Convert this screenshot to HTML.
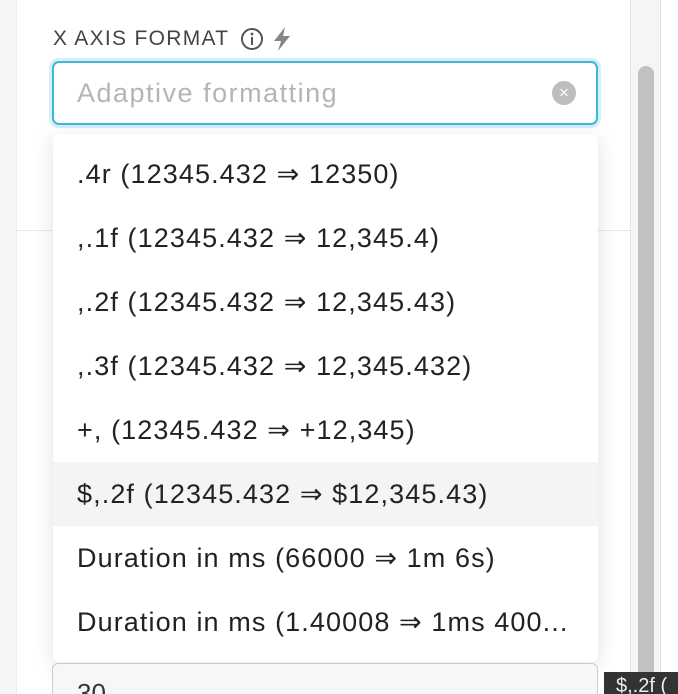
<!DOCTYPE html><html><head><style>
html,body{margin:0;width:678px;height:694px;overflow:hidden}
body{background:#fff;font-family:"Liberation Sans",sans-serif;position:relative}
.a{position:absolute}
</style></head><body>
<div class="a" style="left:0;top:0;width:16px;height:694px;background:#f6f6f6;border-right:1px solid #ececec"></div>
<div class="a" style="left:630px;top:0;width:29px;height:694px;background:#f5f5f5;border-left:1px solid #e6e6e6;border-right:1px solid #e0e0e0"></div>
<div class="a" style="left:638px;top:66px;width:16px;height:628px;background:#c1c1c1;border-radius:8px 8px 0 0"></div>
<div class="a" style="left:16px;top:230px;width:614px;height:1px;background:#e6e6e6"></div>
<div class="a" style="left:53px;top:27px;font-size:21px;color:#444;letter-spacing:1.3px">X AXIS FORMAT</div>
<svg class="a" style="left:240px;top:27px" width="24" height="24" viewBox="0 0 24 24"><circle cx="12" cy="12" r="10" fill="none" stroke="#555" stroke-width="2"/><circle cx="12" cy="7" r="1.4" fill="#555"/><rect x="11" y="10" width="2" height="8" fill="#555"/></svg>
<svg class="a" style="left:270px;top:26px" width="24" height="26" viewBox="0 0 24 26"><path d="M15 1 L4 15 H11 L8 25 L20 10 H13 Z" fill="#888"/></svg>
<div class="a" style="left:52px;top:61px;width:542px;height:60px;border:2px solid #3fb8d5;border-radius:7px;box-shadow:0 0 0 3px #d6eef5;background:#fff"></div>
<div class="a" style="left:77px;top:78px;font-size:27px;color:#b5b5b5;letter-spacing:1.5px">Adaptive formatting</div>
<div class="a" style="left:552px;top:81px;width:24px;height:24px;border-radius:50%;background:#bdbdbd;color:#fff;font-size:17px;line-height:24px;text-align:center">×</div>
<div class="a" style="left:53px;top:134px;width:545px;height:528px;background:#fff;border-radius:6px;box-shadow:0 4px 20px rgba(0,0,0,.12)">
<div style="position:absolute;left:0;top:328px;width:545px;height:64px;background:#f4f4f4"></div>
<div style="position:absolute;left:24px;top:8px;font-size:27px;color:#222;line-height:64px;white-space:nowrap;letter-spacing:1.1px">
<div>.4r (12345.432 ⇒ 12350)</div>
<div>,.1f (12345.432 ⇒ 12,345.4)</div>
<div>,.2f (12345.432 ⇒ 12,345.43)</div>
<div>,.3f (12345.432 ⇒ 12,345.432)</div>
<div>+, (12345.432 ⇒ +12,345)</div>
<div>$,.2f (12345.432 ⇒ $12,345.43)</div>
<div>Duration in ms (66000 ⇒ 1m 6s)</div>
<div>Duration in ms (1.40008 ⇒ 1ms 400...</div>
</div></div>
<div class="a" style="left:52px;top:663px;width:544px;height:50px;border:1px solid #ccc;border-radius:6px;background:#f7f7f7"></div>
<div class="a" style="left:77px;top:678px;font-size:26px;color:#333">30</div>
<div class="a" style="left:604px;top:672px;width:80px;height:30px;background:#333;color:#eee;font-size:20px;padding-left:12px;line-height:28px">$,.2f (</div>
</body></html>
